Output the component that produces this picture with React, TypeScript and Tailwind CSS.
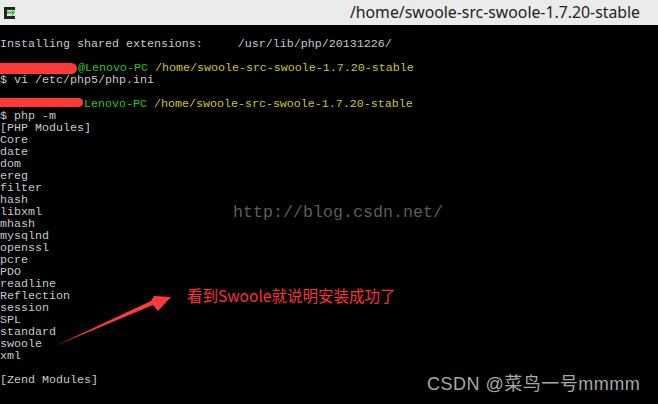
import React from "react";

const mono = { fontFamily: '"Liberation Mono", "DejaVu Sans Mono", monospace' };

export default function App() {
  const modules = [
    "Core","date","dom","ereg","filter","hash","libxml","mhash","mysqlnd","openssl","pcre","PDO","readline","Reflection","session","SPL","standard","swoole","xml",
  ];
  const lines: React.ReactNode[] = [
    <span>
      Installing shared extensions:{"     "}/usr/lib/php/20131226/
    </span>,
    "",
    <span className="flex">
      <span className="inline-block w-[78px]"></span>
      <span className="text-[#1ec81e]">@Lenovo-PC</span>
      <span className="text-[#c8c81e] whitespace-pre"> /home/swoole-src-swoole-1.7.20-stable</span>
    </span>,
    "$ vi /etc/php5/php.ini",
    "",
    <span className="flex">
      <span className="inline-block w-[84px]"></span>
      <span className="text-[#1ec81e]">Lenovo-PC</span>
      <span className="text-[#c8c81e] whitespace-pre"> /home/swoole-src-swoole-1.7.20-stable</span>
    </span>,
    "$ php -m",
    "[PHP Modules]",
    ...modules,
    "",
    "[Zend Modules]",
  ];

  return (
    <div className="w-[658px] h-[404px] bg-black overflow-hidden relative">
      {/* title bar */}
      <div className="h-[25px] bg-[#ebebeb] flex items-center justify-between pl-[2px] pr-[18px]">
        <svg width="16" height="16" viewBox="0 0 16 16">
          <path d="M2 2h11v3H5v6h8v3H2z" fill="#222" />
          <path d="M5 6.5h6l-2-2 1-.5 3 3.5-3 3.5-1-.5 2-2H5z" fill="#22c422" />
        </svg>
        <span
          className="text-[15.8px] text-[#222] leading-none"
          style={{ fontFamily: '"Noto Sans", "Open Sans", sans-serif' }}
        >
          /home/swoole-src-swoole-1.7.20-stable
        </span>
      </div>

      {/* terminal */}
      <div className="pt-[13px] flex flex-col text-[11.67px] leading-[12px] text-[#c8c8c8]" style={mono}>
        {lines.map((l, i) => (
          <div key={i} className="h-[12px] whitespace-pre">
            {l}
          </div>
        ))}
      </div>

      {/* red scribbles */}
      <div className="absolute left-0 top-[63px] w-[77px] h-[11px] bg-[#ff3838] rounded-r-full rounded-l-sm"></div>
      <div className="absolute left-0 top-[98px] w-[83px] h-[9px] bg-[#ff3838] rounded-r-full"></div>

      {/* watermark */}
      <div
        className="absolute left-[233px] top-[203px] text-[16.67px] leading-[20px] text-[#5c5c5c] whitespace-pre"
        style={mono}
      >
        http://blog.csdn.net/
      </div>

      {/* arrow */}
      <svg className="absolute left-0 top-0" width="658" height="404">
        <polygon points="55,346 153,305 158,311 171,297 154,296 151,301" fill="#ff3a3a" />
      </svg>

      {/* red annotation */}
      <div
        className="absolute left-[187px] top-[284px] text-[15.5px] leading-[22px] text-[#ff3030] whitespace-pre"
        style={{ fontFamily: '"Noto Sans CJK SC", "Liberation Sans", sans-serif' }}
      >
        看到Swoole就说明安装成功了
      </div>

      {/* csdn watermark */}
      <div
        className="absolute left-[427px] top-[372px] text-[18px] tracking-[0.5px] leading-[24px] text-[#a8a8a8] whitespace-pre"
        style={{ fontFamily: '"Liberation Sans", "Noto Sans CJK SC", sans-serif' }}
      >
        CSDN @菜鸟一号mmmm
      </div>
    </div>
  );
}
